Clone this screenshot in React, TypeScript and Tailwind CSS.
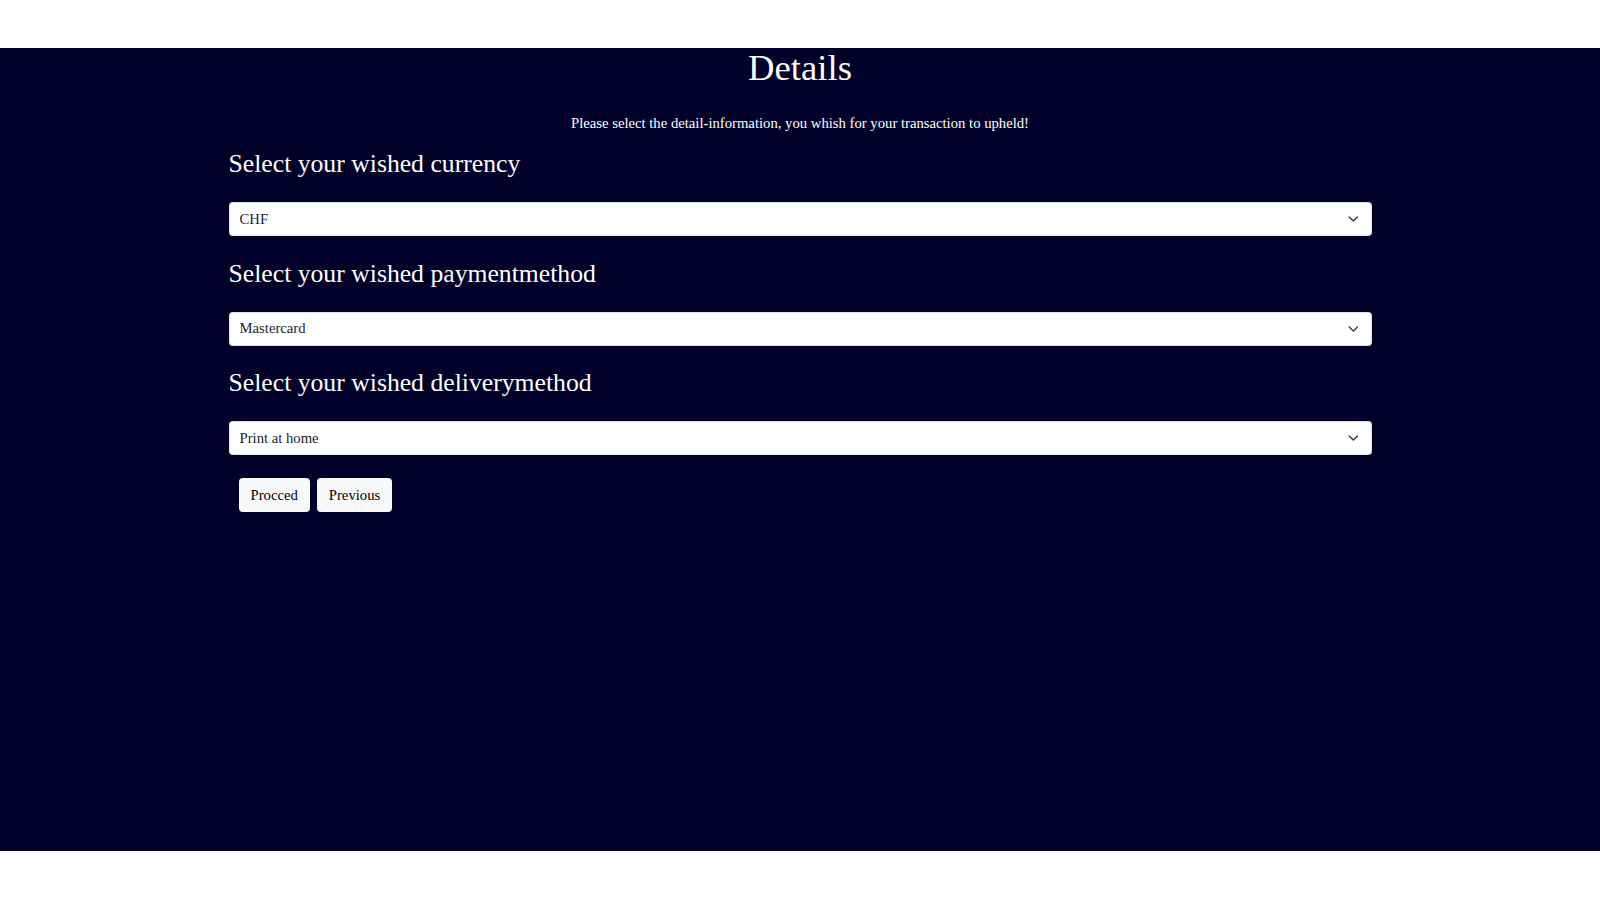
import React from 'react';

const serif = { fontFamily: '"Liberation Serif", "Times New Roman", serif' };

function Chevron() {
    return (
        <svg viewBox="0 0 16 16" className="pointer-events-none absolute right-[11px] top-1/2 h-[11px] w-[14.7px] -translate-y-1/2" fill="none" preserveAspectRatio="xMidYMid meet">
            <path d="m2 5 6 6 6-6" stroke="#343a40" strokeWidth="2" strokeLinecap="round" strokeLinejoin="round" />
        </svg>
    );
}

function SelectGroup({ title, value, options, first }: { title: string; value: string; options: string[]; first?: boolean }) {
    return (
        <div className={first ? 'mt-[15px]' : 'mt-[22.5px]'}>
            <h3 className="text-[25.7px] leading-[30px] font-normal text-white">{title}</h3>
            <div className="relative mt-[23px]">
                <select
                    defaultValue={value}
                    className="block h-[34px] w-full appearance-none rounded-[3.4px] border border-[#dee2e6] bg-white pl-[10px] pr-[33px] text-[14.7px] text-[#212529] outline-none"
                    style={serif}
                >
                    {options.map((o) => (
                        <option key={o} value={o}>{o}</option>
                    ))}
                </select>
                <Chevron />
            </div>
        </div>
    );
}

export default function App() {
    return (
        <div className="min-h-screen bg-white" style={serif}>
            <div className="h-[48px] bg-white" />

            {/* Details form */}
            <div className="h-[803px] bg-[#000028]">
                <div className="mx-auto w-[1143px]">
                    <h1 className="text-center text-[36.7px] leading-[40px] font-normal text-white">Details</h1>
                    <p className="mt-[24px] text-center text-[14.7px] leading-[22px] text-white">
                        Please select the detail-information, you whish for your transaction to upheld!
                    </p>

                    <SelectGroup first title="Select your wished currency" value="CHF" options={['CHF', 'EUR', 'USD']} />
                    <SelectGroup title="Select your wished paymentmethod" value="Mastercard" options={['Mastercard', 'Visa', 'PayPal']} />
                    <SelectGroup title="Select your wished deliverymethod" value="Print at home" options={['Print at home', 'Post']} />

                    <div className="mt-[23px] ml-[10px] flex gap-[7px]">
                        <button className="h-[34px] rounded-[3.4px] border border-[#f8f9fa] bg-[#f8f9fa] px-[11px] text-[14.7px] text-black">
                            Procced
                        </button>
                        <button className="h-[34px] rounded-[3.4px] border border-[#f8f9fa] bg-[#f8f9fa] px-[11px] text-[14.7px] text-black">
                            Previous
                        </button>
                    </div>
                </div>
            </div>
        </div>
    );
}
